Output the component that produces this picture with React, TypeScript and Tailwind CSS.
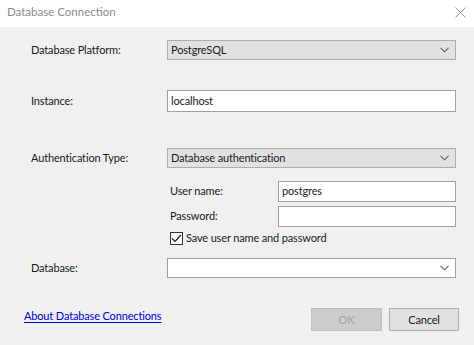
import React from "react";

const Chevron = () => (
  <svg width="9" height="6" viewBox="0 0 9 6" className="shrink-0">
    <path d="M0.5 0.8 L4.5 4.8 L8.5 0.8" fill="none" stroke="#606060" strokeWidth="1.1" />
  </svg>
);

const font = { fontFamily: 'Lato, "Noto Sans", sans-serif' };

export default function App() {
  return (
    <div className="w-[474px] h-[345px] bg-[#f0f0f0] text-[11px] tracking-[-0.15px] text-[#1a1a1a] flex flex-col overflow-hidden" style={font}>
      {/* title bar */}
      <div className="h-[27px] bg-white flex items-center justify-between pl-[7px] pr-[8px] pb-[3px] shrink-0">
        <span className="text-[11.5px] tracking-normal text-[#8c8c8c]">Database Connection</span>
        <svg width="11" height="11" viewBox="0 0 11 11">
          <path d="M0.5 0.5 L10.5 10.5 M10.5 0.5 L0.5 10.5" stroke="#9a9a9a" strokeWidth="1" />
        </svg>
      </div>

      <div className="flex flex-col pl-[31px] pr-[18px] flex-1">
        {/* Database platform */}
        <div className="flex items-center mt-[13px]">
          <span className="w-[136px]">Database Platform:</span>
          <div className="flex-1 h-[20px] bg-[#e1e1e1] border border-[#adadad] flex items-center justify-between pl-[3px] pr-[6px]">
            <span>PostgreSQL</span>
            <Chevron />
          </div>
        </div>

        {/* Instance */}
        <div className="flex items-center mt-[30px]">
          <span className="w-[136px]">Instance:</span>
          <div className="flex-1 h-[22px] bg-white border border-[#a0a0a0] flex items-center pl-[3px]">
            <span>localhost</span>
          </div>
        </div>

        {/* Auth type */}
        <div className="flex items-center mt-[36px]">
          <span className="w-[136px]">Authentication Type:</span>
          <div className="flex-1 h-[20px] bg-[#e1e1e1] border border-[#adadad] flex items-center justify-between pl-[3px] pr-[6px]">
            <span>Database authentication</span>
            <Chevron />
          </div>
        </div>

        <div className="flex flex-col pl-[139px]">
          <div className="flex items-center mt-[13px]">
            <span className="w-[108px]">User name:</span>
            <div className="flex-1 h-[21px] bg-white border border-[#a0a0a0] flex items-center pl-[3px]">
              <span>postgres</span>
            </div>
          </div>
          <div className="flex items-center mt-[4px]">
            <span className="w-[108px]">Password:</span>
            <div className="flex-1 h-[21px] bg-white border border-[#a0a0a0]" />
          </div>
          <div className="flex items-center mt-[5px] h-[13px]">
            <div className="w-[13px] h-[13px] border border-[#333] bg-white flex items-center justify-center mr-[3px]">
              <svg width="11" height="9" viewBox="0 0 11 9">
                <path d="M1 4.5 L4 7.5 L10 1" fill="none" stroke="#222" strokeWidth="1.2" />
              </svg>
            </div>
            <span>Save user name and password</span>
          </div>
        </div>

        {/* Database */}
        <div className="flex items-center mt-[13px]">
          <span className="w-[136px]">Database:</span>
          <div className="flex-1 h-[20px] bg-white border border-[#a0a0a0] flex items-center justify-end pr-[6px]">
            <Chevron />
          </div>
        </div>

        {/* bottom */}
        <div className="flex items-center justify-between mt-[30px] -ml-[7px] -mr-[3px]">
          <a className="text-[#0000cc] underline underline-offset-2 cursor-pointer mb-[7px]">About Database Connections</a>
          <div className="flex gap-[7px]">
            <div className="w-[71px] h-[23px] bg-[#cccccc] border border-[#bfbfbf] flex items-center justify-center text-[#a3a3a3]">OK</div>
            <div className="w-[70px] h-[23px] bg-[#e1e1e1] border border-[#adadad] flex items-center justify-center">Cancel</div>
          </div>
        </div>
      </div>
    </div>
  );
}
